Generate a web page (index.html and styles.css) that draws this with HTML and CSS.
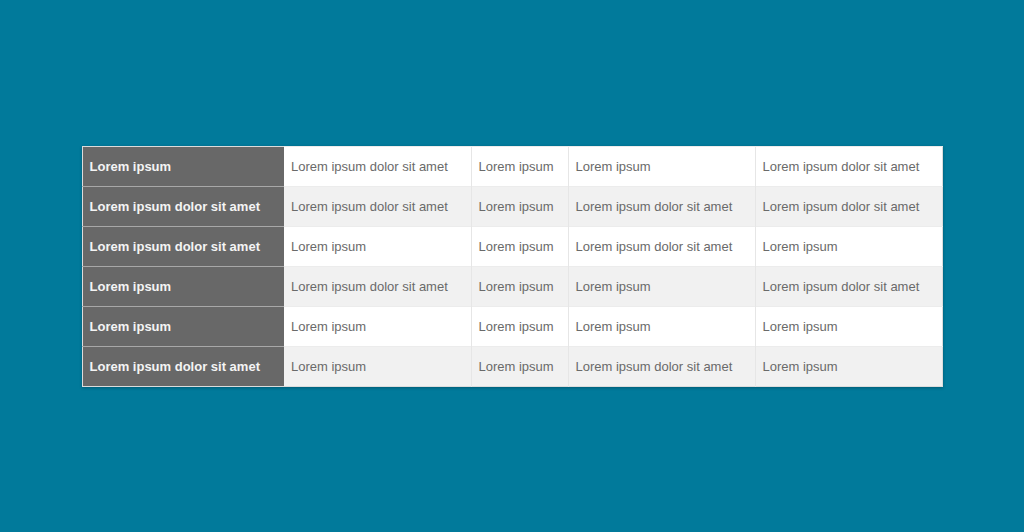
FILE: index.html
```html
<!DOCTYPE html>
<html>
<head>
<meta charset="utf-8">
<link rel="stylesheet" href="styles.css">
</head>
<body>
<div class="page">
  <table class="grid">
    <colgroup>
      <col class="c1"><col class="c2"><col class="c3"><col class="c4"><col class="c5">
    </colgroup>
    <tr><th>Lorem ipsum</th><td>Lorem ipsum dolor sit amet</td><td>Lorem ipsum</td><td>Lorem ipsum</td><td>Lorem ipsum dolor sit amet</td></tr>
    <tr><th>Lorem ipsum dolor sit amet</th><td>Lorem ipsum dolor sit amet</td><td>Lorem ipsum</td><td>Lorem ipsum dolor sit amet</td><td>Lorem ipsum dolor sit amet</td></tr>
    <tr><th>Lorem ipsum dolor sit amet</th><td>Lorem ipsum</td><td>Lorem ipsum</td><td>Lorem ipsum dolor sit amet</td><td>Lorem ipsum</td></tr>
    <tr><th>Lorem ipsum</th><td>Lorem ipsum dolor sit amet</td><td>Lorem ipsum</td><td>Lorem ipsum</td><td>Lorem ipsum dolor sit amet</td></tr>
    <tr><th>Lorem ipsum</th><td>Lorem ipsum</td><td>Lorem ipsum</td><td>Lorem ipsum</td><td>Lorem ipsum</td></tr>
    <tr><th>Lorem ipsum dolor sit amet</th><td>Lorem ipsum</td><td>Lorem ipsum</td><td>Lorem ipsum dolor sit amet</td><td>Lorem ipsum</td></tr>
  </table>
</div>
</body>
</html>
```
FILE: styles.css
```css
html, body {
  margin: 0;
  padding: 0;
  height: 100%;
  background: #017a9b;
}
.page {
  height: 532px;
  display: flex;
  align-items: center;
  justify-content: center;
}
.grid {
  border-collapse: collapse;
  table-layout: fixed;
  width: 860px;
  font-family: "Liberation Sans", Arial, sans-serif;
  font-size: 13px;
  border: 1px solid #dcdcdc;
  box-shadow: 0 1px 3px rgba(0,0,0,0.25);
}
.c1 { width: 202px; }
.c2 { width: 187px; }
.c3 { width: 97px; }
.c4 { width: 187px; }
.c5 { width: 187px; }
.grid th, .grid td {
  height: 40px;
  padding: 0 7px;
  text-align: left;
  white-space: nowrap;
  box-sizing: border-box;
}
.grid th {
  background: #686868;
  color: #f4f4f4;
  font-weight: bold;
  border-top: 1px solid #a8a8a8;
}
.grid tr:first-child th { border-top: 1px solid #dcdcdc; }
.grid td {
  color: #6a6a6a;
  background: #ffffff;
  border-left: 1px solid #e6e6e6;
  border-top: 1px solid #ececec;
}
.grid tr:nth-child(even) td { background: #f1f1f1; }
.grid th + td { border-left: none; }
```
